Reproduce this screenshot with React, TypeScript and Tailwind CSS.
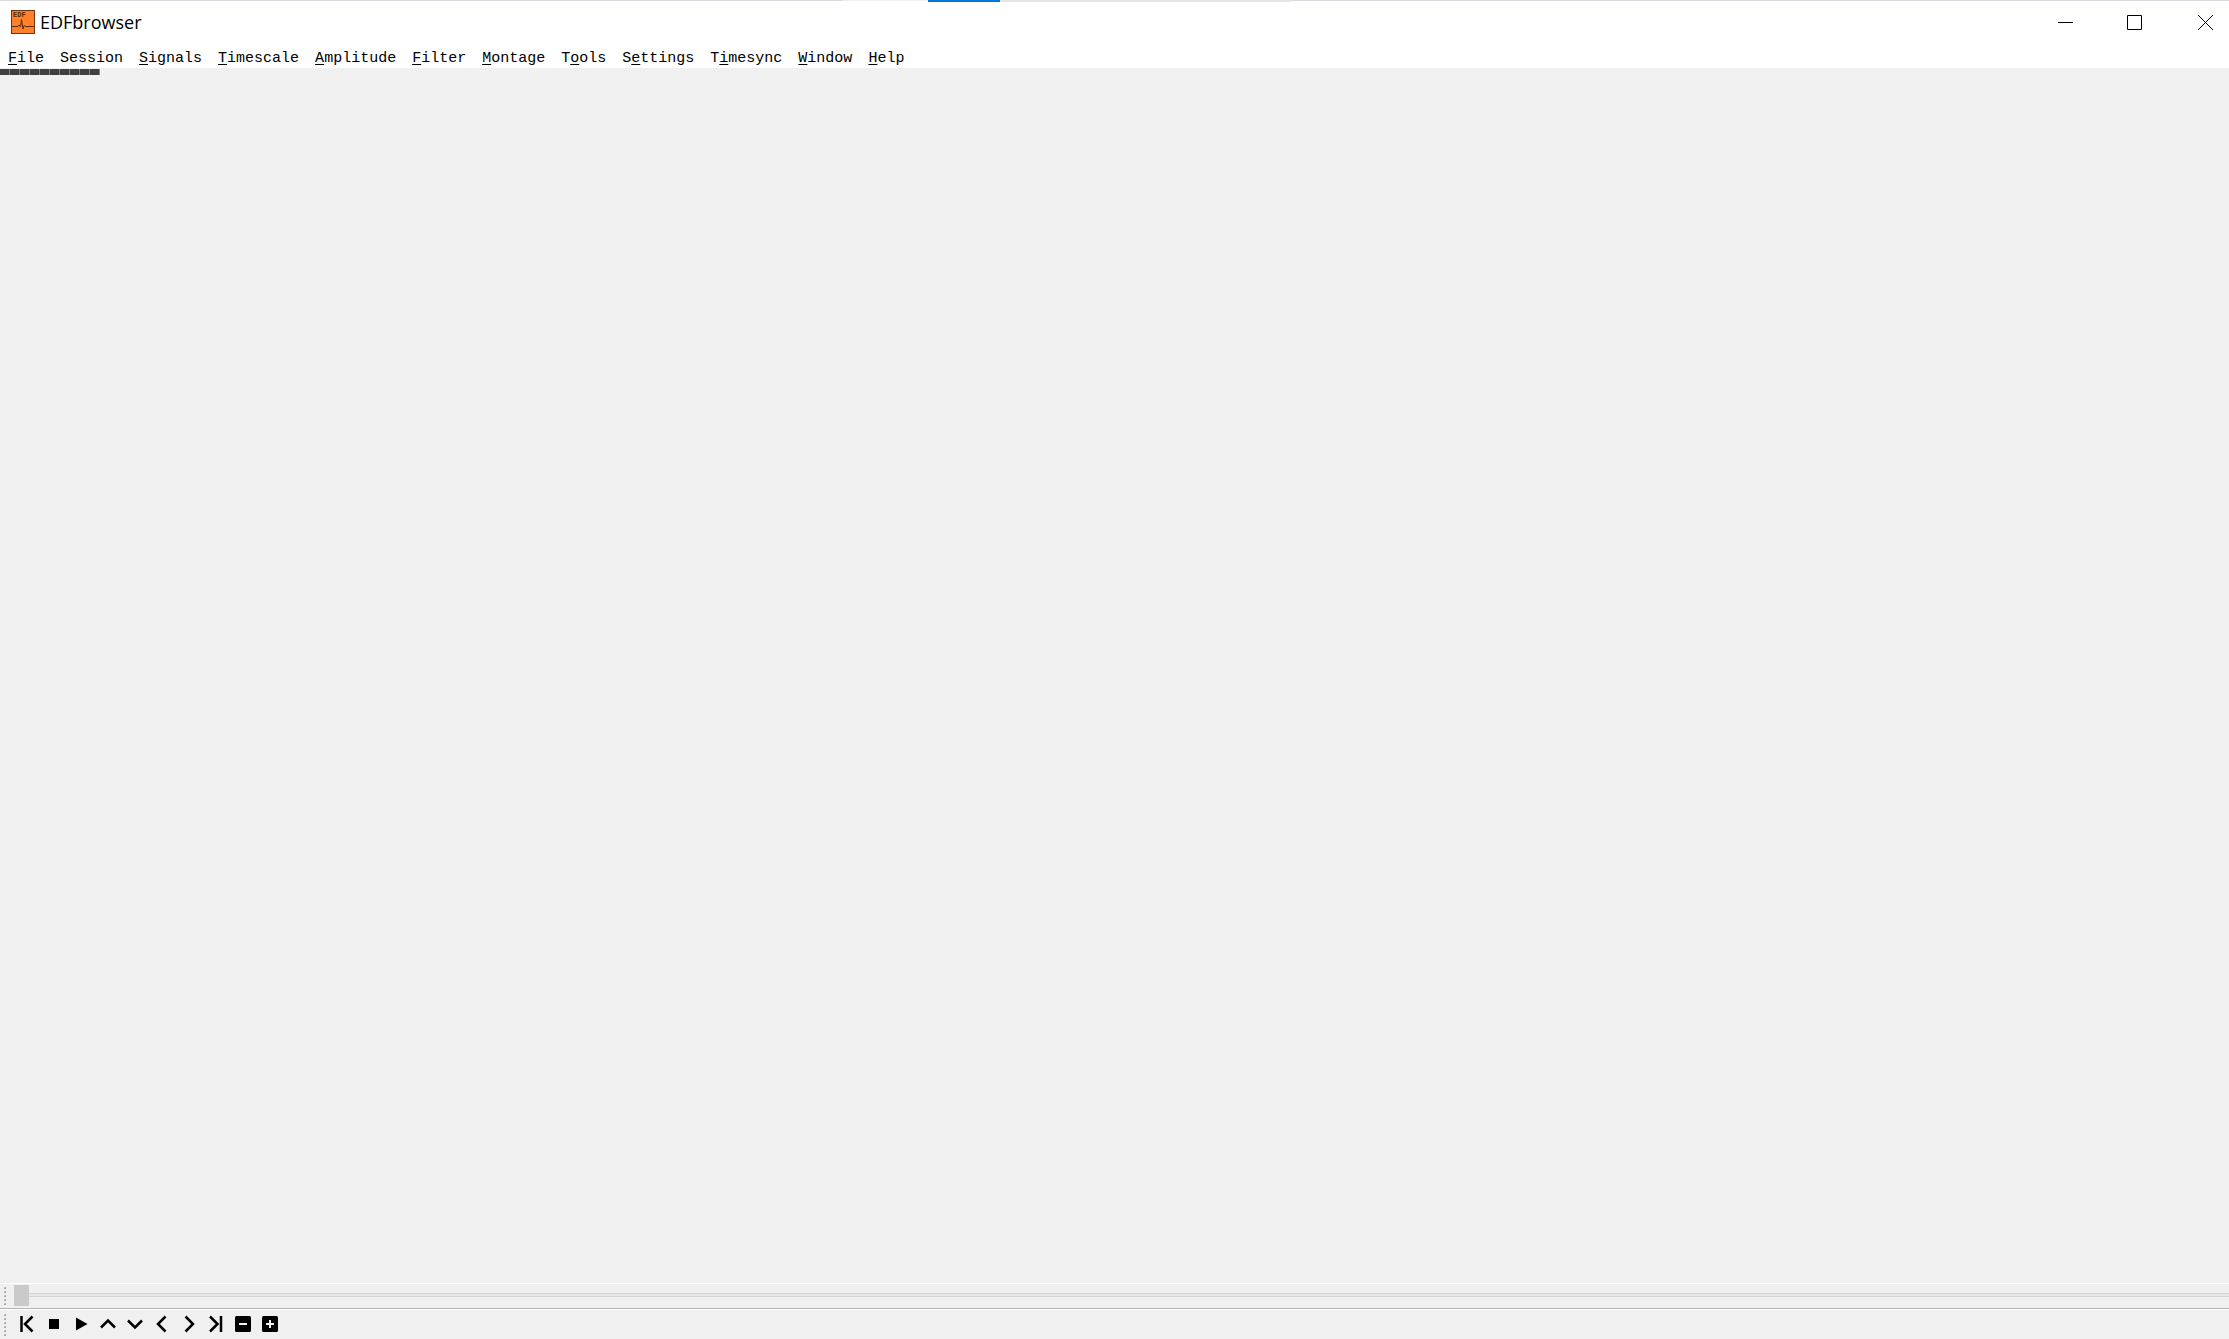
import React, { useState } from 'react';

const menus = [
  { label: 'File', key: 0 },
  { label: 'Session', key: -1 },
  { label: 'Signals', key: 0 },
  { label: 'Timescale', key: 0 },
  { label: 'Amplitude', key: 0 },
  { label: 'Filter', key: 0 },
  { label: 'Montage', key: 0 },
  { label: 'Tools', key: 1 },
  { label: 'Settings', key: 1 },
  { label: 'Timesync', key: 1 },
  { label: 'Window', key: 0 },
  { label: 'Help', key: 0 },
];

const tools = [
  { label: 'Go to start', icon: <path d="M7.5 6v16M18.5 6.5L11 14l7.5 7.5" /> },
  { label: 'Stop', icon: <path d="M8 9h10v10H8z" fill="currentColor" stroke="none" /> },
  { label: 'Play', icon: <path d="M8 7.5v13L19.5 14z" fill="currentColor" stroke="none" /> },
  { label: 'Amplitude up', icon: <path d="M6 17.5l7-7 7 7" /> },
  { label: 'Amplitude down', icon: <path d="M6 10.5l7 7 7-7" /> },
  { label: 'Page back', icon: <path d="M16.5 6.5L9 14l7.5 7.5" /> },
  { label: 'Page forward', icon: <path d="M9.5 6.5L17 14l-7.5 7.5" /> },
  { label: 'Go to end', icon: <path d="M7 6.5l7.5 7.5L7 21.5M18 6v16" /> },
  {
    label: 'Zoom out',
    icon: (
      <>
        <rect x="5" y="6" width="16" height="16" rx="1.5" fill="currentColor" stroke="none" />
        <path d="M9 14h8" stroke="#f0f0f0" strokeWidth="2" />
      </>
    ),
  },
  {
    label: 'Zoom in',
    icon: (
      <>
        <rect x="5" y="6" width="16" height="16" rx="1.5" fill="currentColor" stroke="none" />
        <path d="M9 14h8M13 10v8" stroke="#f0f0f0" strokeWidth="2" />
      </>
    ),
  },
];

const MenuLabel = ({ label, mnemonic }: { label: string; mnemonic: number }) => {
  if (mnemonic < 0) return <>{label}</>;
  return (
    <>
      {label.slice(0, mnemonic)}
      <span className="underline decoration-1 underline-offset-2">{label[mnemonic]}</span>
      {label.slice(mnemonic + 1)}
    </>
  );
};

const Grip = ({ dots }: { dots: number }) => (
  <div className="flex w-[14px] shrink-0 flex-col justify-center gap-[2px] pl-1">
    {Array.from({ length: dots }, (_, i) => (
      <span key={i} className="size-[2px] border-r border-b border-[#a8a8a8] bg-[#cfcfcf]" />
    ))}
  </div>
);

const Logo = () => (
  <svg className="ml-[11px] size-6" viewBox="0 0 24 24" aria-hidden="true">
    <rect x="0.5" y="0.5" width="23" height="23" fill="#ff8029" stroke="#6b3510" />
    <text x="2" y="7" fill="#5a2a08" className="font-['Liberation_Mono',monospace] text-[7px] font-bold">
      EDF
    </text>
    <path d="M1 16.5h6l1-1.5 1 1.5h.5l1-7 1.5 9.5 1.2-3.5 1 1H23" fill="none" stroke="#5a2a08" />
  </svg>
);

const App = () => {
  const [position, setPosition] = useState(0);

  return (
    <div className="flex h-screen flex-col bg-[#f0f0f0] text-black">
      <div className="flex h-[2px] shrink-0 bg-white">
        <div className="flex w-[928px] shrink-0">
          <div className="h-px grow bg-[#d9d9df]" />
          <div className="h-px w-[85px] bg-[#efefef]" />
        </div>
        <div className="w-[72px] shrink-0 bg-[#0078d7]" />
        <div className="w-[290px] shrink-0 bg-[#e5e5e5]" />
        <div className="h-px grow bg-[#d9d9df]" />
      </div>

      <header className="flex h-[43px] shrink-0 items-center bg-white pb-[3px]">
        <Logo />
        <h1 className="ml-[5px] grow font-['Open_Sans','Noto_Sans',sans-serif] text-[18px] leading-6">EDFbrowser</h1>
        <button type="button" aria-label="Minimize" className="flex h-10 w-[69px] items-center justify-center">
          <svg className="size-[15px]" viewBox="0 0 15 15" stroke="currentColor">
            <path d="M0 7.5h15" />
          </svg>
        </button>
        <button type="button" aria-label="Maximize" className="flex h-10 w-[69px] items-center justify-center">
          <svg className="size-[15px]" viewBox="0 0 15 15" fill="none" stroke="currentColor">
            <path d="M0.5 0.5h14v14h-14z" />
          </svg>
        </button>
        <button type="button" aria-label="Close" className="flex h-10 w-[60px] items-center justify-end pr-4">
          <svg className="size-[15px]" viewBox="0 0 15 15" stroke="currentColor">
            <path d="M0 0l15 15M15 0L0 15" />
          </svg>
        </button>
      </header>

      <nav className="flex h-[23px] shrink-0 bg-white font-['Liberation_Mono',monospace] text-[15px]">
        {menus.map((menu) => (
          <button key={menu.label} type="button" className="px-2 pt-1 leading-[17px]">
            <MenuLabel label={menu.label} mnemonic={menu.key} />
          </button>
        ))}
      </nav>

      <main className="grow pt-px">
        <div className="flex h-[6px]">
          {Array.from({ length: 10 }, (_, i) => (
            <span key={i} className="w-[10px] border-r border-[#808080] bg-[#404040]" />
          ))}
        </div>
      </main>

      <div className="flex h-[26px] shrink-0 items-start border-t border-white">
        <div className="flex h-[23px]">
          <Grip dots={5} />
        </div>
        <input
          type="range"
          aria-label="File position"
          min={0}
          max={1000}
          value={position}
          onChange={(e) => setPosition(Number(e.target.value))}
          className="h-[22px] grow appearance-none bg-transparent [&::-webkit-slider-runnable-track]:h-1 [&::-webkit-slider-runnable-track]:border-y [&::-webkit-slider-runnable-track]:border-[#d1d5d5] [&::-webkit-slider-runnable-track]:bg-[#e5e9e9] [&::-webkit-slider-thumb]:-mt-[9px] [&::-webkit-slider-thumb]:h-[21px] [&::-webkit-slider-thumb]:w-[15px] [&::-webkit-slider-thumb]:appearance-none [&::-webkit-slider-thumb]:bg-[#cacaca]"
        />
      </div>

      <div className="flex h-[30px] shrink-0 border-t border-white shadow-[0_-1px_0_#b4b4b4]">
        <Grip dots={6} />
        {tools.map((tool) => (
          <button key={tool.label} type="button" aria-label={tool.label} className="w-[27px]">
            <svg className="h-[29px] w-[27px]" viewBox="0 0 27 29" fill="none" stroke="currentColor" strokeWidth="2.5">
              {tool.icon}
            </svg>
          </button>
        ))}
      </div>
    </div>
  );
};

export default App;
